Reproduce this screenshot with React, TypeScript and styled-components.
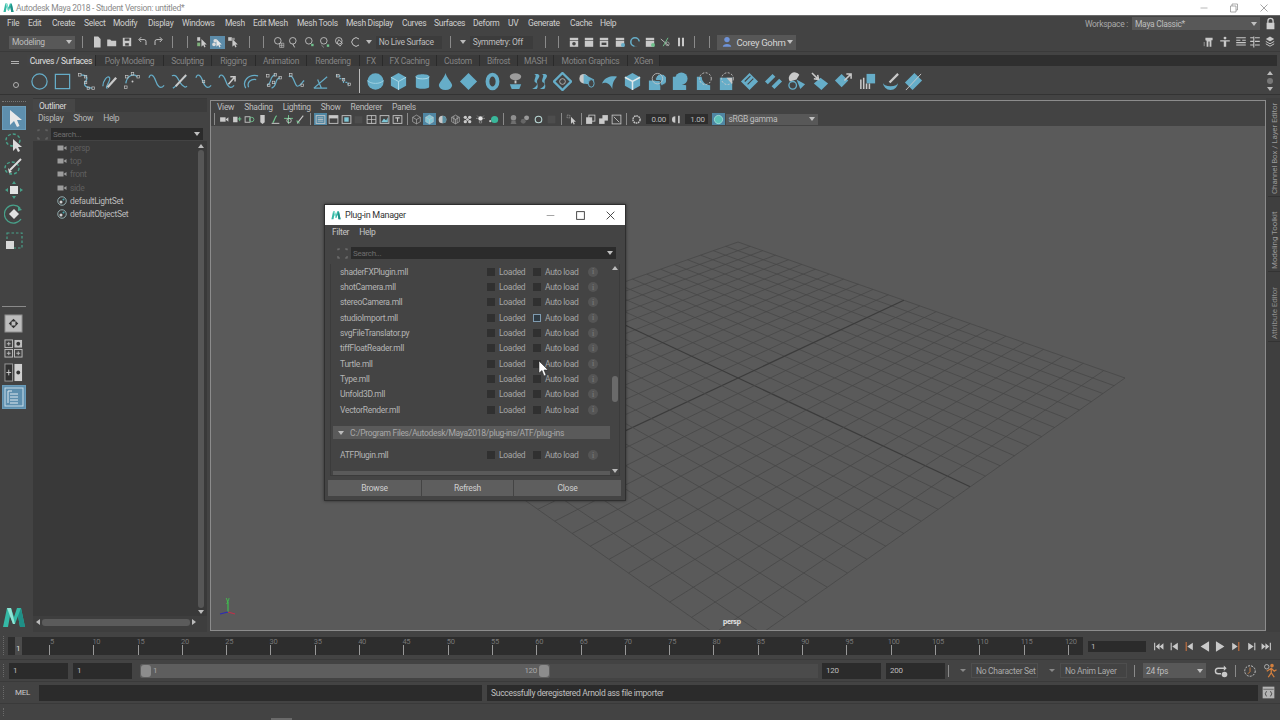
import React from "react";
import styled, { createGlobalStyle } from "styled-components";

const Global = createGlobalStyle`
  html, body { margin: 0; padding: 0; background: #444; }
  * { box-sizing: border-box; }
  body { font-family: Roboto, "Liberation Sans", Arial, sans-serif; font-size: 8.5px; letter-spacing: -0.3px; color: #c4c4c4; }
`;

const BLUE = "#66adc8";
const GRAY = "#c9c9c9";

/* ---------- layout ---------- */

const Page = styled.div`
  position: relative;
  width: 1280px;
  height: 720px;
  overflow: hidden;
  background: #434343;
  display: flex;
  flex-direction: column;
`;

const TitleBar = styled.div`
  height: 15px;
  flex: none;
  background: #fff;
  color: #8a8a8a;
  display: flex;
  align-items: center;
  padding: 0 11px 0 3px;
  gap: 2px;
  font-size: 8.5px;
`;

const WinControls = styled.div`
  margin-left: auto;
  display: flex;
  gap: 20px;
  align-items: center;
`;

const MenuBar = styled.div`
  height: 18px;
  flex: none;
  border-top: 1px solid #6a6a6a;
  display: flex;
  align-items: center;
  padding: 0 7px 4px;
  position: relative;
`;

const MenuItem = styled.span<{ $w: number }>`
  flex: none;
  width: ${(p) => p.$w}px;
  white-space: nowrap;
  color: #cfcfcf;
`;

const Workspace = styled.div`
  margin-left: auto;
  display: flex;
  align-items: center;
  height: 14px;
  color: #a8a8a8;
  gap: 4px;
  margin-right: -4px;
  margin-top: 2px;
`;

const ToolBar = styled.div`
  height: 19px;
  flex: none;
  display: flex;
  align-items: center;
  padding: 0 0 0 9px;
  border-bottom: 1px solid #3a3a3a;
`;

const Select = styled.div<{ $w: number; $dark?: boolean; $h?: number }>`
  width: ${(p) => p.$w}px;
  height: ${(p) => p.$h ?? 13}px;
  flex: none;
  background: ${(p) => (p.$dark ? "#3c3c3c" : "#585858")};
  color: #bdbdbd;
  display: flex;
  align-items: center;
  padding: 0 3px;
  white-space: nowrap;
  position: relative;
`;

const Caret = styled.span<{ $c?: string }>`
  position: absolute;
  right: 3px;
  top: 50%;
  margin-top: -2px;
  width: 0;
  height: 0;
  border-style: solid;
  border-width: 4px 3.5px 0 3.5px;
  border-color: ${(p) => p.$c ?? "#c0c0c0"} transparent transparent transparent;
`;

const Sep = styled.span<{ $x?: number }>`
  flex: none;
  width: 1px;
  height: 12px;
  background: #8a8a8a;
  margin: 0 ${(p) => p.$x ?? 5}px;
`;

const Gap = styled.span<{ $w: number }>`
  flex: none;
  width: ${(p) => p.$w}px;
`;

const Btn = styled.span<{ $w?: number; $on?: boolean }>`
  flex: none;
  width: ${(p) => p.$w ?? 15.3}px;
  height: 13px;
  display: flex;
  align-items: center;
  justify-content: center;
  background: ${(p) => (p.$on ? "#5c8ba8" : "transparent")};
`;

const UserBtn = styled.div`
  flex: none;
  width: 79px;
  height: 15px;
  background: #575757;
  display: flex;
  align-items: center;
  padding-left: 4px;
  gap: 3px;
  color: #d4d4d4;
  font-size: 9.5px;
  position: relative;
`;

const RightIcons = styled.div`
  margin-left: auto;
  display: flex;
  align-items: center;
  gap: 0;
  padding-right: 2px;
`;

const ShelfTabsRow = styled.div`
  margin-top: 3px;
  height: 11px;
  flex: none;
  display: flex;
  align-items: center;
  background: #2f2f2f;
  margin-left: 27px;
  margin-right: 3px;
  position: relative;
`;

const ShelfTab = styled.span<{ $w: number; $on?: boolean }>`
  flex: none;
  width: ${(p) => p.$w}px;
  height: 100%;
  display: flex;
  align-items: center;
  justify-content: center;
  white-space: nowrap;
  font-size: 8.5px;
  color: ${(p) => (p.$on ? "#e0e0e0" : "#858585")};
  background: ${(p) => (p.$on ? "#444" : "#3a3a3a")};
  border-right: 1px solid #2a2a2a;
`;

const ShelfTabsFill = styled.span`
  flex: 1;
`;

const ShelfGrip = styled.span`
  position: absolute;
  left: -16px;
  top: 6px;
  width: 8px;
  height: 3px;
  border-top: 1px solid #b0b0b0;
  border-bottom: 1px solid #b0b0b0;
`;

const ShelfRow = styled.div`
  height: 29px;
  flex: none;
  display: flex;
  align-items: center;
  padding: 2px 0 0 27.6px;
  position: relative;
  border-bottom: 1px solid #333;
`;

const ShelfCell = styled.span`
  flex: none;
  width: 23.43px;
  display: flex;
  justify-content: center;
`;

const ShelfDivider = styled.span`
  flex: none;
  width: 1px;
  height: 24px;
  background: #bbb;
  margin: 0 4px 0 3px;
`;

const ShelfDot = styled.span`
  position: absolute;
  left: 13px;
  top: 16px;
  width: 6px;
  height: 6px;
  border: 1px solid #b0b0b0;
  border-radius: 50%;
`;

const ShelfScroll = styled.span`
  position: absolute;
  right: 6px;
  top: 5px;
  width: 8px;
  height: 20px;
  display: flex;
  flex-direction: column;
  align-items: center;
  justify-content: space-between;
`;

const ShelfKnob = styled.span`
  width: 6px;
  height: 6px;
  border-radius: 50%;
  background: #777;
`;

const TriUp = styled.span`
  width: 0;
  height: 0;
  border-style: solid;
  border-width: 0 3.5px 4px 3.5px;
  border-color: transparent transparent #bbb transparent;
`;

const TriDown = styled.span`
  width: 0;
  height: 0;
  border-style: solid;
  border-width: 4px 3.5px 0 3.5px;
  border-color: #bbb transparent transparent transparent;
`;

const Main = styled.div`
  flex: 1;
  min-height: 0;
  display: flex;
  padding-top: 3px;
`;

const ToolBox = styled.div`
  flex: none;
  width: 33px;
  padding: 0 6px 0 0;
  display: flex;
  flex-direction: column;
  align-items: center;
`;

const GripDots = styled.div`
  width: 24px;
  height: 1px;
  margin: 3px 0 4px;
  border-top: 1px dotted #777;
`;

const Tool = styled.div<{ $on?: boolean; $h?: number; $mt?: number }>`
  width: 24px;
  height: ${(p) => p.$h ?? 24}px;
  margin-top: ${(p) => p.$mt ?? 0}px;
  flex: none;
  display: flex;
  align-items: center;
  justify-content: center;
  background: ${(p) => (p.$on ? "#5e8fae" : "transparent")};
  border: 1px solid ${(p) => (p.$on ? "#6a9cba" : "transparent")};
`;

const ToolRule = styled.div`
  width: 24px;
  height: 1px;
  background: #8a8a8a;
  margin: 53px 0 6px;
  flex: none;
`;

const LogoSlot = styled.div`
  margin-top: auto;
  padding-bottom: 3px;
`;

const Outliner = styled.div`
  flex: none;
  width: 174px;
  margin-right: 3px;
  display: flex;
  flex-direction: column;
  background: #393939;
`;

const OutTabRow = styled.div`
  height: 13px;
  background: #3c3c3c;
  display: flex;
  margin-top: 1px;
  flex: none;
`;

const OutTab = styled.div`
  width: 42px;
  background: #464646;
  color: #d8d8d8;
  padding-left: 6px;
  display: flex;
  align-items: center;
`;

const OutMenu = styled.div`
  height: 14px;
  background: #434343;
  display: flex;
  align-items: center;
  flex: none;
  padding: 0 0 3px 5px;
  gap: 10px;
  color: #b8b8b8;
`;

const OutSearch = styled.div`
  height: 15px;
  background: #434343;
  display: flex;
  align-items: center;
  padding: 2px 4px 1px 3px;
  flex: none;
  gap: 2px;
`;

const SearchField = styled.div`
  flex: 1;
  height: 12px;
  background: #2b2b2b;
  color: #6e6e6e;
  font-size: 8px;
  padding-left: 2px;
  display: flex;
  align-items: center;
  position: relative;
`;

const OutBody = styled.div`
  flex: 1;
  min-height: 0;
  display: flex;
`;

const OutList = styled.div`
  flex: 1;
  padding: 0 0 0 24px;
`;

const OutRow = styled.div<{ $dim?: boolean }>`
  height: 13.3px;
  display: flex;
  align-items: center;
  gap: 3px;
  color: ${(p) => (p.$dim ? "#5f5f5f" : "#bcbcbc")};
  font-size: 8.5px;
`;

const VScroll = styled.div`
  flex: none;
  width: 7px;
  margin-right: 3px;
  display: flex;
  flex-direction: column;
  align-items: center;
  padding: 3px 0 2px;
  gap: 2px;
`;

const VThumb = styled.div`
  flex: 1;
  width: 6px;
  background: #565656;
  border-radius: 3px;
`;

const HScroll = styled.div`
  height: 16px;
  flex: none;
  display: flex;
  align-items: center;
  padding: 0 11px 4px 3px;
  gap: 2px;
  background: #3e3e3e;
`;

const HThumb = styled.div`
  flex: 1;
  height: 7px;
  background: #5b5b5b;
  border-radius: 3px;
`;

const TriLeft = styled.span`
  width: 0;
  height: 0;
  flex: none;
  border-style: solid;
  border-width: 3.5px 4px 3.5px 0;
  border-color: transparent #bbb transparent transparent;
`;

const TriRight = styled.span`
  width: 0;
  height: 0;
  flex: none;
  border-style: solid;
  border-width: 3.5px 0 3.5px 4px;
  border-color: transparent transparent transparent #bbb;
`;

const ViewPanel = styled.div`
  flex: none;
  width: 1056px;
  margin-top: 2px;
  margin-bottom: 1px;
  border: 1px solid #8c8c8c;
  display: flex;
  flex-direction: column;
`;

const ViewMenu = styled.div`
  height: 12px;
  flex: none;
  display: flex;
  align-items: center;
  padding-left: 6px;
  gap: 10px;
  color: #bdbdbd;
  background: #434343;
`;

const ViewTools = styled.div`
  height: 12px;
  flex: none;
  display: flex;
  align-items: center;
  padding-left: 2px;
`;

const VBtn = styled.span<{ $on?: boolean }>`
  flex: none;
  width: 12.75px;
  height: 12px;
  display: flex;
  align-items: center;
  justify-content: center;
  background: ${(p) => (p.$on ? "#4f86a3" : "transparent")};
`;

const NumField = styled.span`
  flex: none;
  width: 23px;
  height: 10px;
  background: #2d2d2d;
  color: #bbb;
  font-size: 8px;
  display: flex;
  align-items: center;
  justify-content: flex-end;
  padding-right: 3px;
`;

const Canvas = styled.div`
  flex: 1;
  min-height: 0;
  margin-top: 1px;
  background: #5a5a5a;
  position: relative;
`;

const CanvasSvg = styled.svg`
  display: block;
  width: 100%;
  height: 100%;
`;

const CamLabel = styled.span`
  position: absolute;
  left: 512px;
  bottom: 4px;
  color: #e4e4e4;
  font-size: 7.5px;
  font-weight: bold;
`;

const SideTabs = styled.div`
  flex: 1;
  padding: 0 0 0 2px;
  display: flex;
  flex-direction: column;
  background: #3f3f3f;
`;

const SideTab = styled.div<{ $h: number; $dim?: boolean }>`
  height: ${(p) => p.$h}px;
  flex: none;
  width: 12px;
  writing-mode: vertical-rl;
  transform: rotate(180deg);
  display: flex;
  align-items: center;
  justify-content: flex-start;
  padding-top: 2px;
  font-size: 8px;
  letter-spacing: -0.1px;
  white-space: nowrap;
  color: ${(p) => (p.$dim ? "#8e8e8e" : "#9a9a9a")};
  border-top: 1px solid #333;
`;

const BottomRow = styled.div`
  flex: none;
  position: relative;
  display: flex;
  align-items: center;
  &::before {
    content: "";
    position: absolute;
    left: 3px;
    top: 4px;
    bottom: 4px;
    border-left: 1px dotted #6a6a6a;
  }
`;

const TimeRow = styled(BottomRow)`
  height: 27px;
  padding: 5px 0 4px 8px;
`;

const Ruler = styled.div`
  flex: none;
  width: 1075px;
  height: 18px;
  background: #2d2d2d;
  display: flex;
  position: relative;
`;

const FrameCell = styled.span`
  position: absolute;
  left: 7px;
  top: 0;
  display: flex;
  align-items: flex-end;
  width: 7px;
  height: 18px;
  background: #4b4b4b;
  color: #ddd;
  font-size: 8px;
  padding: 0 0 2px 1px;
`;

const RulerCell = styled.div<{ $w: number }>`
  flex: none;
  width: ${(p) => p.$w}px;
  height: 18px;
  position: relative;
  display: flex;
  flex-direction: column;
  align-items: flex-end;
`;

const RulerNum = styled.span`
  position: absolute;
  top: 0;
  right: -9px;
  width: 14px;
  text-align: center;
  font-size: 7.5px;
  color: #777;
`;

const RulerTick = styled.span`
  margin-top: auto;
  width: 1px;
  height: 10px;
  background: #999;
`;

const CurField = styled.span`
  flex: none;
  width: 58px;
  height: 11px;
  background: #2b2b2b;
  margin-left: 5px;
  padding-left: 3px;
  display: flex;
  align-items: center;
  color: #bdbdbd;
  font-size: 8px;
`;

const Transport = styled.div`
  margin-left: 5px;
  display: flex;
  align-items: center;
`;

const TBtn = styled.span`
  flex: none;
  width: 15.4px;
  display: flex;
  justify-content: center;
`;

const RangeRow = styled(BottomRow)`
  height: 22px;
  padding-left: 9px;
  border-top: 1px solid #3a3a3a;
`;

const FrameInput = styled.span<{ $ml?: number }>`
  flex: none;
  width: 59px;
  height: 16px;
  background: #2b2b2b;
  margin-left: ${(p) => p.$ml ?? 0}px;
  padding-left: 4px;
  display: flex;
  align-items: center;
  color: #bdbdbd;
  font-size: 8px;
`;

const RangeBar = styled.div`
  flex: none;
  width: 410px;
  height: 14px;
  background: #5e5e5e;
  margin-left: 8px;
  border-radius: 2px;
  display: flex;
  align-items: center;
  padding: 0 1px;
  color: #a8a8a8;
  font-size: 8px;
  gap: 2px;
`;

const RangeKnob = styled.span`
  width: 10px;
  height: 12px;
  background: #8c8c8c;
  border-radius: 3px;
  flex: none;
`;

const RangeTrail = styled.span`
  flex: 1;
  text-align: right;
`;

const RangeTray = styled.span`
  flex: none;
  width: 268px;
  height: 14px;
  background: #4b4b4b;
  margin-right: 4px;
`;

const SetLabel = styled.span<{ $w: number }>`
  flex: none;
  width: ${(p) => p.$w}px;
  height: 15px;
  border: 1px solid #4e4e4e;
  display: flex;
  align-items: center;
  padding-left: 4px;
  color: #a9a9a9;
  font-size: 8.5px;
  white-space: nowrap;
`;

const SmallTri = styled.span<{ $ml: number; $mr: number }>`
  flex: none;
  width: 0;
  height: 0;
  margin: 0 ${(p) => p.$mr}px 0 ${(p) => p.$ml}px;
  border-style: solid;
  border-width: 3px 3px 0 3px;
  border-color: #888 transparent transparent transparent;
`;

const CmdRow = styled(BottomRow)`
  height: 22px;
  padding-left: 15px;
  border-top: 1px solid #3a3a3a;
`;

const MelLabel = styled.span`
  flex: none;
  width: 24px;
  color: #c8c8c8;
  font-size: 8px;
`;

const CmdField = styled.span<{ $w: number; $ml?: number }>`
  flex: none;
  width: ${(p) => p.$w}px;
  height: 16px;
  background: #2b2b2b;
  margin-left: ${(p) => p.$ml ?? 0}px;
  display: flex;
  align-items: center;
  padding-left: 4px;
  color: #c0c0c0;
  font-size: 8.5px;
`;

const HelpRow = styled(BottomRow)`
  height: 17px;
  background: #434343;
  border-top: 1px solid #3a3a3a;
  align-items: flex-end;
  padding-left: 271px;
`;

const HelpGrip = styled.span`
  width: 21px;
  height: 2px;
  background: #6a6a6a;
`;

/* ---------- plug-in manager ---------- */

const Dialog = styled.div`
  position: absolute;
  left: 324px;
  top: 204px;
  width: 302px;
  height: 297px;
  border: 1px solid #2f2f2f;
  background: #444;
  box-shadow: 0 0 3px rgba(0, 0, 0, 0.5);
  display: flex;
  flex-direction: column;
`;

const DialogTitle = styled.div`
  height: 20px;
  flex: none;
  background: #fff;
  color: #333;
  display: flex;
  align-items: center;
  padding-left: 6px;
  gap: 4px;
  font-size: 9px;
  position: relative;
`;

const DialogCtl = styled.div`
  margin-left: auto;
  display: flex;
  align-items: center;
  gap: 19px;
  padding-right: 9px;
`;

const DialogMenu = styled.div`
  height: 14px;
  flex: none;
  margin-top: 0;
  display: flex;
  align-items: center;
  padding-left: 7px;
  gap: 10px;
  color: #c4c4c4;
`;

const DialogSearch = styled.div`
  height: 23px;
  flex: none;
  display: flex;
  align-items: center;
  padding: 8px 9px 3px 11px;
  gap: 2px;
`;

const ListBox = styled.div`
  margin: 2px 5px 0;
  height: 212px;
  flex: none;
  display: flex;
  border: 1px solid #3b3b3b;
  border-top: none;
  overflow: hidden;
`;

const ListBody = styled.div`
  flex: none;
  width: 279px;
  overflow: hidden;
`;

const PlugRow = styled.div<{ $mt?: number }>`
  height: 15.35px;
  display: grid;
  grid-template-columns: 147px 46px 55px 10px;
  align-items: center;
  padding-left: 9px;
  margin-top: ${(p) => p.$mt ?? 0}px;
  color: #b4b4b4;
  font-size: 8.5px;
`;

const CheckCell = styled.div`
  display: flex;
  align-items: center;
  gap: 4px;
  color: #a4a4a4;
`;

const Check = styled.span<{ $on?: boolean }>`
  flex: none;
  width: 8px;
  height: 8px;
  background: ${(p) => (p.$on ? "#2f3b44" : "#303030")};
  border: 1px solid ${(p) => (p.$on ? "#7f9bb0" : "#303030")};
`;

const Info = styled.span`
  width: 10px;
  height: 10px;
  border-radius: 50%;
  background: #555;
  color: #6f6f6f;
  font: bold 8px "Liberation Serif", serif;
  display: flex;
  align-items: center;
  justify-content: center;
`;

const Section = styled.div<{ $mt: number }>`
  height: 13px;
  margin: ${(p) => p.$mt}px 0 0 2px;
  width: 277px;
  background: #5a5a5a;
  display: flex;
  align-items: center;
  padding-left: 5px;
  gap: 6px;
  color: #a8a8a8;
  font-size: 8.5px;
  white-space: nowrap;
`;

const ListScroll = styled.div`
  flex: none;
  width: 10px;
  display: flex;
  flex-direction: column;
  align-items: center;
  padding: 2px 0 2px;
`;

const ScrollThumb = styled.div`
  width: 6px;
  height: 26px;
  margin-top: 106px;
  background: #6a6a6a;
  border-radius: 3px;
`;

const ScrollFill = styled.div`
  flex: 1;
`;

const DialogBtns = styled.div`
  display: flex;
  gap: 1px;
  padding: 4px 3px 0;
`;

const DialogBtn = styled.div<{ $w: number }>`
  flex: none;
  width: ${(p) => p.$w}px;
  height: 16px;
  background: #5e5e5e;
  color: #cfcfcf;
  font-size: 8.5px;
  display: flex;
  align-items: center;
  justify-content: center;
`;

const Pointer = styled.svg`
  position: absolute;
  left: 538px;
  top: 361px;
`;

/* ---------- drawings ---------- */

function Ico({ s = 12, children }: { s?: number; children: React.ReactNode }) {
  return (
    <svg width={s} height={s} viewBox="0 0 20 20" style={{ display: "block", flex: "none" }}>
      {children}
    </svg>
  );
}

function MLogo({ s }: { s: number }) {
  return (
    <svg width={s} height={s} viewBox="0 0 24 20" style={{ display: "block", flex: "none" }}>
      <polygon points="1,20 5,1 9,1 12,10 15,1 19,1 23,20 18,20 16,9 13,17 11,17 8,9 6,20" fill="#35b9a6" />
      <polygon points="5,1 9,1 13,17 11,17" fill="#8fe4d4" />
      <polygon points="19,1 23,20 18,20 16,9" fill="#1f8f86" />
    </svg>
  );
}

const cv = (x: number, y: number) => <rect x={x - 1.3} y={y - 1.3} width="2.6" height="2.6" fill="none" stroke={GRAY} strokeWidth=".7" />;
const l = { fill: "none", stroke: BLUE, strokeWidth: 1.3 };
const f = { fill: BLUE };
const wave = "M2 6C4 1 7 3 9 9S14 19 18 14";

// shelf: curves
const curveIcons: React.ReactNode[] = [
  <circle cx="10" cy="10" r="8" {...l} />,
  <rect x="2.5" y="2.5" width="15" height="15" {...l} />,
  <><path d="M4 3C10 3 12 6 9 10S10 17 16 17" {...l} />{cv(3, 3)}{cv(9, 5)}{cv(9, 11)}{cv(12, 17)}{cv(17, 17)}</>,
  <><path d="M3 15C3 9 8 3 10 6S4 17 8 17" {...l} /><path d="M8 16L17 6" stroke={GRAY} strokeWidth="2.4" /></>,
  <><path d="M3 12C4 4 11 1 15 5" {...l} />{cv(4, 5)}{cv(10, 2)}{cv(3, 16)}{cv(16, 5)}<circle cx="10" cy="10" r="1" fill={GRAY} /></>,
  <path d={wave} {...l} />,
  <><path d="M2 4C8 1 9 11 13 14S16 16 18 15M3 17C8 14 11 9 17 4" {...l} /><path d="M6 15L17 3" stroke={GRAY} strokeWidth="2" /></>,
  <><path d={wave} {...l} />{cv(10, 10)}</>,
  <><path d={wave} {...l} /><path d="M12 13L18 6M14 5h5v5" stroke={GRAY} strokeWidth="1.6" fill="none" /></>,
  <path d="M5 17C1 10 7 2 18 4M8 16C6 11 10 7 16 8" {...l} />,
  <><path d="M3 14C9 12 5 4 12 3M8 17C15 14 10 8 17 6" {...l} />{cv(4, 4)}{cv(12, 3)}{cv(5, 14)}{cv(10, 11)}{cv(17, 6)}</>,
  <><path d="M2 5C7 1 8 15 11 15S15 12 18 9" {...l} />{cv(4, 3)}{cv(16, 14)}</>,
  <path d="M3 17L17 5M3 17L17 17M7 8L11 17" {...l} />,
  <><path d="M2 4h4v3h4v4h5v4" {...l} strokeDasharray="2 1.4" />{cv(4, 4)}{cv(10, 8)}{cv(16, 13)}</>,
];

const diamond = "M10 1L19 10L10 19L1 10Z";
const quadSq = <path d="M3 5h5a9 9 0 0 0 9 9v5H3Z" {...f} />;
const surfaceIcons: React.ReactNode[] = [
  <><circle cx="10" cy="10" r="8.6" {...f} /><path d="M1.6 9C5 13 15 13 18.4 9" fill="none" stroke="#9ed0e0" strokeWidth="1" /></>,
  <><path d="M10 1L18 5.5V14.5L10 19L2 14.5V5.5Z" {...f} /><path d="M2 5.5L10 10L18 5.5M10 10V19" fill="none" stroke="#b5dfec" strokeWidth=".9" /></>,
  <><path d="M3 4.5C3 1.5 17 1.5 17 4.5V15.5C17 18.5 3 18.5 3 15.5Z" {...f} /><path d="M3 5C3 8 17 8 17 5" fill="none" stroke="#b5dfec" strokeWidth=".9" /></>,
  <path d="M10 1C11 6 17 11 17 14A7 5 0 0 1 3 14C3 11 9 6 10 1Z" {...f} />,
  <path d={diamond} {...f} />,
  <><ellipse cx="10" cy="10" rx="5.3" ry="7.3" fill="none" stroke={BLUE} strokeWidth="4" /></>,
  <><ellipse cx="10" cy="5" rx="6" ry="3.6" fill="#9c9c9c" /><path d="M10 9v3" stroke={GRAY} strokeWidth="2" /><path d="M4 13h12l-2 5H6Z" {...f} /></>,
  <><path d="M3 2C10 2 2 9 6 11S4 17 2 18H7C10 15 6 11 8 8S11 3 8 2Z" {...f} /><path d="M11 2C18 2 10 9 14 11S12 17 10 18H15C18 15 14 11 16 8S19 3 16 2Z" {...f} /></>,
  <><path d={diamond} fill="none" stroke={BLUE} strokeWidth="2.4" /><circle cx="10" cy="10" r="3" fill="#444" stroke={GRAY} strokeWidth=".8" /></>,
  <><ellipse cx="7" cy="7" rx="4.5" ry="5" fill={GRAY} /><path d="M7 2L18 8V14L7 12Z" {...f} /><ellipse cx="15" cy="12" rx="3" ry="4" fill="#444" stroke={BLUE} /></>,
  <path d="M2 12C6 4 14 4 18 5C15 8 13 11 13 18C11 13 7 10 2 12Z" {...f} />,
  <><path d="M10 1L18 5.5V14.5L10 19L2 14.5V5.5Z" {...f} /><path d="M2 5.5L10 10L18 5.5M10 10V19" fill="none" stroke="#dfe9ec" strokeWidth="1.6" /></>,
  <><path d="M2 9h12v10H2Z" {...f} /><path d="M14 9h-5a6 6 0 1 1 5 5Z" fill={BLUE} stroke="#444" /><circle cx="11" cy="7" r="5.5" fill="none" stroke={GRAY} strokeWidth=".8" /></>,
  <>{quadSq}<circle cx="12" cy="7" r="6.5" {...f} /></>,
  <>{quadSq}<circle cx="12" cy="7" r="6.2" fill="none" stroke={GRAY} strokeWidth="1" strokeDasharray="2 1.6" /></>,
  <><rect x="3" y="6" width="13" height="13" {...f} /><path d="M10 6h6v7Z" fill={GRAY} /><circle cx="11" cy="7" r="6.2" fill="none" stroke={GRAY} strokeWidth="1" strokeDasharray="2 1.6" /></>,
  <><path d={diamond} {...f} /><path d="M5 10L11 4M8 13L14 7" stroke="#444" strokeWidth="1.2" /></>,
  <><path d="M1 10L9 2L12 5L4 13ZM8 15L16 7L19 10L11 18Z" {...f} /></>,
  <><path d="M3 10A6 6 0 0 1 13 3L10 8Z" fill={GRAY} /><path d="M10 8L19 13L14 18Z" {...f} /><circle cx="6" cy="14" r="4" fill="none" stroke={BLUE} strokeWidth="1.4" /></>,
  <><path d="M10 6L18 12L11 19L3 12Z" {...f} /><path d="M1 1L8 8M3 7L8 8L7 3" fill="none" stroke={GRAY} strokeWidth="1.6" /></>,
  <><path d="M8 2L15 9L8 16L1 9Z" {...f} /><path d="M11 9L18 2M13 2h5v5" fill="none" stroke={GRAY} strokeWidth="1.6" /></>,
  <><rect x="9" y="2" width="9" height="10" {...f} /><path d="M3 8v10M6 6v12M9 12v6M12 12v6" stroke={GRAY} strokeWidth="1.6" /></>,
  <><path d="M2 11A8 8 0 0 0 18 11A8 4 0 0 1 2 11Z" {...f} /><path d="M9 11L18 2" stroke={GRAY} strokeWidth="2.4" /></>,
  <><path d="M11 1L19 9L9 19L1 11Z" {...f} /><path d="M2 19L18 2" stroke={GRAY} strokeWidth="1" /></>,
];

// status line
const g = { fill: GRAY };
const gl = { fill: "none", stroke: GRAY, strokeWidth: 1.6 };
const fileIcons: React.ReactNode[] = [
  <path d="M5 1h7l4 4v14H5Z" {...g} />,
  <path d="M2 6h5l2 2h8v9H2Z" {...g} />,
  <><path d="M3 3h14v14H3Z" {...g} /><rect x="6" y="4" width="8" height="4" fill="#444" /><rect x="7" y="12" width="6" height="4" fill="#444" /></>,
  <path d="M15 15V9a3 3 0 0 0-3-3H4M7 2L3 6l4 4" {...gl} />,
  <path d="M5 15V9a3 3 0 0 1 3-3H16M13 2l4 4-4 4" {...gl} />,
];
const arrowP = "M9 5V18L12 15L14 19L16 18L14 14H18Z";
const selIcons: React.ReactNode[] = [
  <><path d={arrowP} {...g} /><rect x="2" y="2" width="5" height="6" {...g} /><rect x="2" y="11" width="5" height="6" fill="#7eb07a" /></>,
  <><path d={arrowP} fill="#e8e8e8" /><circle cx="7" cy="8" r="3" fill="#dcdcdc" /><circle cx="5" cy="14" r="3" fill="#dcdcdc" /></>,
  <><path d={arrowP} {...g} /><rect x="2" y="2" width="6" height="6" {...g} /><rect x="8" y="3" width="5" height="4" fill="#8f8f8f" /></>,
];
const snap = (c: React.ReactNode) => (
  <><circle cx="8" cy="8" r="5.5" fill="none" stroke={GRAY} strokeWidth="1.4" />{c}</>
);
const snapIcons: React.ReactNode[] = [
  snap(<><path d="M11 12h7v7h-7ZM14.5 12v7M11 15.5h7" stroke={GRAY} fill="none" strokeWidth="1" /></>),
  snap(<path d="M8 13L11 19" stroke={GRAY} strokeWidth="1.6" />),
  snap(<rect x="12" y="13" width="4" height="4" fill="#6fc28d" />),
  snap(<><path d="M4 15l4 4" stroke={GRAY} /><rect x="13" y="14" width="4" height="4" fill="#6fc28d" /></>),
  snap(<path d="M8 6L14 12L10 17L5 12Z" fill="none" stroke={GRAY} strokeWidth="1.4" />),
  <path d="M15 5A7 7 0 1 0 15 15" fill="none" stroke={GRAY} strokeWidth="1.6" />,
];
const clap = (c: React.ReactNode) => (
  <><path d="M3 3h14v4H3Z" {...g} strokeDasharray="2 1" /><rect x="3" y="8" width="14" height="10" {...g} />{c}</>
);
const renderIcons: React.ReactNode[] = [
  clap(<circle cx="10" cy="13" r="3" fill="#444" />),
  clap(null),
  clap(<rect x="6" y="11" width="8" height="4" fill="#444" />),
  clap(<circle cx="15" cy="15" r="3.4" fill={BLUE} />),
  <><circle cx="10" cy="10" r="7" fill="none" stroke={BLUE} strokeWidth="2.6" /><rect x="9" y="9" width="10" height="9" fill="#444" /></>,
  clap(<circle cx="15" cy="15" r="3.2" fill="#6fc28d" />),
  <><path d="M3 5l13 11" stroke={GRAY} strokeWidth="1.4" /><path d="M15 3l-8 14" stroke="#6fc28d" strokeWidth="1.6" /><circle cx="14" cy="13" r="3" fill="none" stroke={GRAY} /></>,
  <path d="M5 3h3.4v14H5ZM11.6 3H15v14h-3.4Z" {...g} />,
];
const wsIcons: [number, React.ReactNode][] = [
  [15, <><path d="M4 3h12v4h-2v11h-3V9H9v9H6V8L4 7Z" {...g} /><path d="M2 10v7" stroke={GRAY} /></>],
  [17, <><circle cx="10" cy="3.5" r="2.4" {...g} /><path d="M2 7h16v2h-6v9h-4V9H2Z" {...g} /></>],
  [15, <path d="M2 3h16M2 7h7M2 11h16M2 15h16M12 7h6" stroke={GRAY} strokeWidth="1.8" />],
  [13, <path d="M2 3h5M10 3h8M2 9h5M10 9h8M2 15h5M10 15h8M8 1v18" stroke={GRAY} strokeWidth="1.8" fill="none" />],
  [17, <><path d="M10 1L17 5L10 9L3 5Z" {...g} /><path d="M3 9L10 13L17 9M3 13L10 17L17 13" {...gl} /></>],
];

// panel toolbar
const cam = <><rect x="2" y="6" width="10" height="8" {...g} /><path d="M12 10L17 6V14Z" {...g} /></>;
const pane = (c: React.ReactNode) => <><rect x="2" y="3" width="16" height="14" fill="none" stroke={GRAY} strokeWidth="1.6" />{c}</>;
const panelIcons1: React.ReactNode[] = [
  cam,
  <><rect x="2" y="5" width="8" height="10" {...g} /><path d="M10 9h7M14 5v8" stroke="#6fc28d" strokeWidth="1.8" /></>,
  <><rect x="2" y="5" width="9" height="10" fill="none" stroke={GRAY} strokeWidth="1.6" /><circle cx="14" cy="10" r="4" fill="none" stroke="#6fc28d" strokeWidth="1.6" /></>,
  <path d="M6 2h8v13l-4 3-4-3Z" {...g} />,
  <><path d="M5 16C8 13 8 7 12 3" stroke="#6fc28d" strokeWidth="2.2" fill="none" /><path d="M3 17h14" stroke={GRAY} strokeWidth="1.8" /></>,
  <><path d="M10 2v16M2 8h16" stroke="#6fc28d" strokeWidth="1.8" /><circle cx="11" cy="12" r="4" fill="none" stroke={GRAY} strokeWidth="1.5" /></>,
  <><path d="M4 17L15 3" stroke={GRAY} strokeWidth="2" /><path d="M3 12l5 5" stroke="#6fc28d" strokeWidth="2" /></>,
];
const panelIcons2: [boolean, React.ReactNode][] = [
  [true, pane(<path d="M5 7h10M5 10h10M5 13h10" stroke={GRAY} strokeWidth="1.4" />)],
  [false, pane(<rect x="2" y="3" width="16" height="5" {...g} />)],
  [false, pane(<rect x="6" y="6" width="8" height="8" fill="#7ec6d6" />)],
  [false, <rect x="3" y="4" width="14" height="13" fill="#4d4d4d" />],
  [false, pane(<path d="M2 10h16M10 3v14" stroke={GRAY} strokeWidth="1.3" />)],
  [false, pane(<path d="M4 15L9 8L13 12L16 6V15Z" fill="#7ec6d6" />)],
  [false, pane(<path d="M6 7h8M10 7v7" stroke={GRAY} strokeWidth="2" />)],
];
const cube = (c: string) => <><path d="M10 2L17 6V14L10 18L3 14V6Z" fill={c} stroke={GRAY} strokeWidth="1" /><path d="M3 6L10 10L17 6M10 10V18" fill="none" stroke={GRAY} strokeWidth="1" /></>;
const panelIcons3: [boolean, React.ReactNode][] = [
  [false, cube("none")],
  [true, cube("#7ec6d6")],
  [false, <><circle cx="10" cy="10" r="7" {...g} /><path d="M10 3A7 7 0 0 1 10 17Z" fill="#5a8ea0" /></>],
  [false, <>{cube("none")}<path d="M7 4v12M13 4v12" stroke={GRAY} /></>],
  [false, <><circle cx="6" cy="6" r="3" {...g} /><circle cx="14" cy="6" r="3" {...g} /><circle cx="6" cy="14" r="3" {...g} /><circle cx="14" cy="14" r="3" {...g} /><circle cx="10" cy="10" r="2.4" fill={GRAY} /></>],
  [false, <><circle cx="10" cy="8" r="4" fill="#e6e6e6" /><path d="M8 13h4v3H8ZM2 8h3M15 8h3M4 3l2 2M16 3l-2 2" stroke={GRAY} /></>],
  [false, <><circle cx="12" cy="10" r="6.5" fill="#39b79a" /><circle cx="4" cy="13" r="2" {...g} /></>],
];
const panelIcons4: React.ReactNode[] = [
  <><circle cx="10" cy="7" r="5" fill="#8f8f8f" /><path d="M7 13h6v2H7ZM5 17h10" stroke="#6f6f6f" strokeWidth="2" /></>,
  <><circle cx="12" cy="7" r="4.5" fill="#9a9a9a" /><circle cx="6" cy="13" r="4.5" fill="#666" /></>,
  <circle cx="10" cy="10" r="6" fill="none" stroke="#b9d7d5" strokeWidth="2" />,
  <rect x="3" y="3" width="14" height="14" fill="#4d4d4d" />,
];

function VRow({ items }: { items: React.ReactNode[] }) {
  return <>{items.map((c, i) => <VBtn key={i}><Ico s={11}>{c}</Ico></VBtn>)}</>;
}

// toolbox
const toolSet = [
  <path d="M6 2L6 17L10 13L13 19L15.5 18L13 12L18 12Z" fill="#e9e9e9" />,
  <><ellipse cx="9" cy="8" rx="7" ry="6" fill="none" stroke="#48a18a" strokeWidth="1.4" strokeDasharray="3 2" /><path d="M9 7V19L12 16L14 20L16 19L14 15H18Z" fill="#dcdcdc" /></>,
  <><ellipse cx="8" cy="12" rx="7" ry="6" fill="none" stroke="#48a18a" strokeWidth="1.4" strokeDasharray="3 2" /><path d="M6 14L17 3" stroke="#ddd" strokeWidth="2" /><path d="M4 12L8 16L5 17Z" fill="#ddd" /></>,
  <><rect x="6" y="6" width="8" height="8" fill="#e2e2e2" /><path d="M10 1L12 4H8ZM10 19L12 16H8ZM1 10L4 8V12ZM19 10L16 8V12Z" fill="#48a18a" /></>,
  <><path d="M10 5L15 10L10 15L5 10Z" fill="#e2e2e2" /><path d="M16 4A9 9 0 1 0 17 15" fill="none" stroke="#48a18a" strokeWidth="1.3" /><path d="M14 2L18 6L14 7Z" fill="#48a18a" /></>,
  <><rect x="3" y="2" width="15" height="15" fill="none" stroke="#48a18a" strokeWidth="1.2" strokeDasharray="2.5 2" /><rect x="2" y="10" width="8" height="8" fill="#d8d8d8" /></>,
];

const menus: [string, number][] = [
  ["File", 21], ["Edit", 24], ["Create", 32], ["Select", 29], ["Modify", 35], ["Display", 34], ["Windows", 43],
  ["Mesh", 28], ["Edit Mesh", 44], ["Mesh Tools", 49], ["Mesh Display", 56], ["Curves", 32], ["Surfaces", 39],
  ["Deform", 35], ["UV", 20], ["Generate", 42], ["Cache", 30], ["Help", 30],
];

const shelfTabs: [string, number, boolean?][] = [
  ["Curves / Surfaces", 69, true], ["Poly Modeling", 68], ["Sculpting", 48], ["Rigging", 44], ["Animation", 51], ["Rendering", 53],
  ["FX", 23], ["FX Caching", 54], ["Custom", 43], ["Bifrost", 38], ["MASH", 36], ["Motion Graphics", 74], ["XGen", 32],
];

const plugins1 = [
  "shaderFXPlugin.mll", "shotCamera.mll", "stereoCamera.mll", "studioImport.mll", "svgFileTranslator.py",
  "tiffFloatReader.mll", "Turtle.mll", "Type.mll", "Unfold3D.mll", "VectorRender.mll",
];

function PlugLine({ name, auto, mt }: { name: string; auto?: boolean; mt?: number }) {
  return (
    <PlugRow $mt={mt}>
      <span>{name}</span>
      <CheckCell><Check />Loaded</CheckCell>
      <CheckCell><Check $on={auto} />Auto load</CheckCell>
      <Info>i</Info>
    </PlugRow>
  );
}

// floor grid projected through a homography, in page coordinates
type P = [number, number];
const T: P = [738, 242], R: P = [1125, 378], N: P = [738, 650], L: P = [351, 378];

function project(u: number, v: number): P {
  const dx1 = R[0] - N[0], dx2 = L[0] - N[0], sx = T[0] - R[0] + N[0] - L[0];
  const dy1 = R[1] - N[1], dy2 = L[1] - N[1], sy = T[1] - R[1] + N[1] - L[1];
  const d = dx1 * dy2 - dx2 * dy1;
  const g2 = (sx * dy2 - dx2 * sy) / d;
  const h2 = (dx1 * sy - sx * dy1) / d;
  const a = R[0] - T[0] + g2 * R[0], b = L[0] - T[0] + h2 * L[0];
  const e = R[1] - T[1] + g2 * R[1], ff = L[1] - T[1] + h2 * L[1];
  const w = g2 * u + h2 * v + 1;
  return [(a * u + b * v + T[0]) / w, (e * u + ff * v + T[1]) / w];
}

function FloorGrid() {
  const lines: React.ReactNode[] = [];
  const n = 24;
  for (let i = 0; i <= n; i++) {
    const t = i / n;
    const mid = i === n / 2;
    const st = mid ? "#3c3c3c" : "#484848";
    const a = project(t, 0), b = project(t, 1), c = project(0, t), d = project(1, t);
    lines.push(<line key={`a${i}`} x1={a[0]} y1={a[1]} x2={b[0]} y2={b[1]} stroke={st} strokeWidth={mid ? 1.2 : 0.8} />);
    lines.push(<line key={`b${i}`} x1={c[0]} y1={c[1]} x2={d[0]} y2={d[1]} stroke={st} strokeWidth={mid ? 1.2 : 0.8} />);
  }
  return (
    <CanvasSvg viewBox="211 126 1054 504" preserveAspectRatio="none">
      {lines}
      <line x1="228" y1="612" x2="228" y2="602" stroke="#37d24a" strokeWidth="1" />
      <text x="226" y="602" fontSize="7" fill="#37d24a" fontFamily="Liberation Sans">y</text>
      <line x1="228" y1="612" x2="235" y2="614" stroke="#c0304a" strokeWidth="1.2" />
      <line x1="228" y1="612" x2="220" y2="614" stroke="#2a2ab8" strokeWidth="1.2" />
    </CanvasSvg>
  );
}

export default function App() {
  return (
    <Page>
      <Global />
      <TitleBar>
        <MLogo s={11} />
        <span>Autodesk Maya 2018 - Student Version: untitled*</span>
        <WinControls>
          <Ico s={10}><path d="M3 10h14" stroke="#a0a0a0" strokeWidth="1.5" /></Ico>
          <Ico s={10}><path d="M3 6h11v12H3ZM6 6V2h11v12h-3" fill="none" stroke="#888" strokeWidth="1.4" /></Ico>
          <Ico s={10}><path d="M3 3L17 17M17 3L3 17" stroke="#888" strokeWidth="1.5" /></Ico>
        </WinControls>
      </TitleBar>

      <MenuBar>
        {menus.map(([m, w]) => <MenuItem key={m} $w={w}>{m}</MenuItem>)}
        <Workspace>
          <span>Workspace :</span>
          <Select $w={128} $h={13}>Maya Classic*<Caret /></Select>
          <Ico s={13}><path d="M5 9V6a5 5 0 0 1 10 0v3h1v10H4V9Z" fill="#cfcfcf" /><path d="M7 9V6a3 3 0 0 1 6 0v3Z" fill="#434343" /></Ico>
        </Workspace>
      </MenuBar>

      <ToolBar>
        <Select $w={66}>Modeling<Caret /></Select>
        <Gap $w={7} />
        <Sep $x={0} />
        <Gap $w={6} />
        {fileIcons.map((c, i) => <Btn key={i}><Ico>{c}</Ico></Btn>)}
        <Gap $w={7} /><Sep $x={0} /><Gap $w={14} /><Sep $x={0} /><Gap $w={6} />
        {selIcons.map((c, i) => <Btn key={i} $on={i === 1}><Ico>{c}</Ico></Btn>)}
        <Gap $w={9} /><Sep $x={0} /><Gap $w={13} /><Sep $x={0} /><Gap $w={7} />
        {snapIcons.map((c, i) => <Btn key={i}><Ico>{c}</Ico></Btn>)}
        <Gap $w={2.5} />
        <TriDown />
        <Gap $w={4} />
        <Select $w={66} $dark>No Live Surface</Select>
        <Gap $w={8} />
        <Sep $x={0} />
        <Gap $w={9} />
        <TriDown />
        <Gap $w={4} />
        <Select $w={63} $dark>Symmetry: Off</Select>
        <Gap $w={12} />
        <Sep $x={0} /><Gap $w={12} /><Sep $x={0} />
        <Gap $w={7.4} />
        {renderIcons.map((c, i) => <Btn key={i}><Ico>{c}</Ico></Btn>)}
        <Gap $w={6} />
        <Sep $x={0} /><Gap $w={14} /><Sep $x={0} />
        <Gap $w={7} />
        <UserBtn>
          <Ico s={12}><circle cx="10" cy="6" r="4.5" fill="#6f93d8" /><path d="M3 18C3 12 17 12 17 18Z" fill="#6f93d8" /></Ico>
          Corey Gohm
          <Caret />
        </UserBtn>
        <RightIcons>
          {wsIcons.map(([w, c], i) => <Btn key={i} $w={w}><Ico>{c}</Ico></Btn>)}
        </RightIcons>
      </ToolBar>

      <ShelfTabsRow>
        <ShelfGrip />
        {shelfTabs.map(([t, w, on]) => <ShelfTab key={t} $w={w} $on={on}>{t}</ShelfTab>)}
        <ShelfTabsFill />
      </ShelfTabsRow>

      <ShelfRow>
        <ShelfDot />
        {curveIcons.map((c, i) => <ShelfCell key={i}><Ico s={19}>{c}</Ico></ShelfCell>)}
        <ShelfDivider />
        {surfaceIcons.map((c, i) => <ShelfCell key={i}><Ico s={19}>{c}</Ico></ShelfCell>)}
        <ShelfScroll><TriUp /><ShelfKnob /><TriDown /></ShelfScroll>
      </ShelfRow>

      <Main>
        <ToolBox>
          <GripDots />
          {toolSet.map((c, i) => <Tool key={i} $on={i === 0} $mt={i === 5 ? 3 : 0}><Ico s={20}>{c}</Ico></Tool>)}
          <ToolRule />
          <Tool $h={20}>
            <Ico s={19}><rect x="1" y="1" width="18" height="18" fill="#bdbdbd" stroke="#888" /><path d="M10 5L13 8H7ZM10 15L13 12H7ZM5 10L8 7V13ZM15 10L12 7V13Z" fill="#333" /></Ico>
          </Tool>
          <Tool $h={20} $mt={5}>
            <Ico s={19}><g stroke="#bdbdbd" fill="none"><rect x="1" y="1" width="8" height="8" /><rect x="1" y="11" width="8" height="8" /><rect x="11" y="11" width="8" height="8" /><path d="M5 3v4M3 5h4M5 13v4M3 15h4M15 13v4M13 15h4" /></g><rect x="11" y="1" width="8" height="8" fill="#bdbdbd" /><circle cx="15" cy="5" r="2" fill="#333" /></Ico>
          </Tool>
          <Tool $h={20} $mt={4}>
            <Ico s={19}><rect x="1" y="1" width="8" height="18" fill="#303030" stroke="#9a9a9a" /><path d="M5 7v6M2.5 10h5" stroke="#ccc" /><rect x="11" y="1" width="8" height="18" fill="#cfcfcf" /><circle cx="15" cy="10" r="2" fill="#333" /></Ico>
          </Tool>
          <Tool $on $h={24} $mt={3}>
            <Ico s={20}><rect x="1" y="1" width="18" height="18" fill="none" stroke="#c8dce8" /><path d="M4 4h4M6 7h8M6 10h8M6 13h8M6 16h8M4 4v12" stroke="#dfe9f0" /></Ico>
          </Tool>
          <LogoSlot><MLogo s={24} /></LogoSlot>
        </ToolBox>

        <Outliner>
          <OutTabRow><OutTab>Outliner</OutTab></OutTabRow>
          <OutMenu><span>Display</span><span>Show</span><span>Help</span></OutMenu>
          <OutSearch>
            <Ico s={13}><path d="M3 5V3h3M14 3h3v2M3 14v3h3M14 17h3v-3" fill="none" stroke="#6a6a6a" strokeWidth="1.6" /></Ico>
            <SearchField>Search...<Caret /></SearchField>
          </OutSearch>
          <OutBody>
            <OutList>
              {["persp", "top", "front", "side"].map((n) => (
                <OutRow key={n} $dim>
                  <Ico s={10}><rect x="1" y="5" width="12" height="10" fill="#9c9c9c" /><path d="M13 10L19 6V14Z" fill="#9c9c9c" /></Ico>
                  {n}
                </OutRow>
              ))}
              {["defaultLightSet", "defaultObjectSet"].map((n) => (
                <OutRow key={n}>
                  <Ico s={10}><circle cx="10" cy="10" r="8.5" fill="none" stroke="#a8c8cc" strokeWidth="1.6" /><circle cx="8" cy="12" r="3" fill="#d0d0d0" /><circle cx="13" cy="7" r="2" fill="#45a8b0" /></Ico>
                  {n}
                </OutRow>
              ))}
            </OutList>
            <VScroll><TriUp /><VThumb /><TriDown /></VScroll>
          </OutBody>
          <HScroll><TriLeft /><HThumb /><TriRight /></HScroll>
        </Outliner>

        <ViewPanel>
          <ViewMenu>
            {["View", "Shading", "Lighting", "Show", "Renderer", "Panels"].map((m) => <span key={m}>{m}</span>)}
          </ViewMenu>
          <ViewTools>
            <Sep $x={1} />
            <Gap $w={2} />
            <VRow items={panelIcons1} />
            <Sep $x={3} />
            {panelIcons2.map(([on, c], i) => <VBtn key={i} $on={on}><Ico s={11}>{c}</Ico></VBtn>)}
            <Sep $x={3} />
            {panelIcons3.map(([on, c], i) => <VBtn key={i} $on={on}><Ico s={11}>{c}</Ico></VBtn>)}
            <Sep $x={3} />
            <VRow items={panelIcons4} />
            <Sep $x={3} />
            <VBtn><Ico s={11}><path d={arrowP} {...g} /><path d="M2 2h5v5H2Z" fill="none" stroke={GRAY} strokeDasharray="1.5 1" /></Ico></VBtn>
            <Sep $x={3} />
            <VBtn><Ico s={11}><rect x="2" y="6" width="11" height="12" {...g} /><rect x="7" y="2" width="11" height="11" fill="none" stroke={GRAY} strokeWidth="1.5" /></Ico></VBtn>
            <VBtn><Ico s={11}><rect x="2" y="8" width="10" height="10" {...g} /><rect x="8" y="2" width="10" height="10" {...g} /></Ico></VBtn>
            <VBtn><Ico s={11}><rect x="2" y="2" width="16" height="16" fill="none" stroke={GRAY} strokeWidth="1.5" /><path d="M5 5L15 15" stroke={GRAY} strokeWidth="1.5" /></Ico></VBtn>
            <Sep $x={3} />
            <VBtn><Ico s={11}><circle cx="10" cy="10" r="6.5" fill="none" stroke={GRAY} strokeWidth="2.6" strokeDasharray="3 1.2" /></Ico></VBtn>
            <Gap $w={3.5} />
            <NumField>0.00</NumField>
            <Gap $w={2} />
            <VBtn><Ico s={11}><path d="M6 4A6 6 0 0 0 6 16Z" fill={GRAY} /><path d="M11 3h3v14h-3Z" {...g} /></Ico></VBtn>
            <Gap $w={1} />
            <NumField>1.00</NumField>
            <Gap $w={4} />
            <VBtn $on><Ico s={11}><circle cx="10" cy="10" r="7.5" fill="#5cc0b8" stroke="#cfe" /></Ico></VBtn>
            <Gap $w={1} />
            <Select $w={92} $h={11}>sRGB gamma<Caret /></Select>
          </ViewTools>
          <Canvas>
            <FloorGrid />
            <CamLabel>persp</CamLabel>
          </Canvas>
        </ViewPanel>

        <SideTabs>
          <SideTab $h={99}>Channel Box / Layer Editor</SideTab>
          <SideTab $h={75}>Modeling Toolkit</SideTab>
          <SideTab $h={70} $dim>Attribute Editor</SideTab>
        </SideTabs>
      </Main>

      <TimeRow>
        <Ruler>
          <FrameCell>1</FrameCell>
          {Array.from({ length: 24 }, (_, i) => (
            <RulerCell key={i} $w={i === 0 ? 42 : 44.3}>
              <RulerNum>{(i + 1) * 5}</RulerNum>
              <RulerTick />
            </RulerCell>
          ))}
        </Ruler>
        <CurField>1</CurField>
        <Transport>
          {[
            <><path d="M3 3v14" stroke={GRAY} strokeWidth="2" /><path d="M12 4L5 10L12 16ZM19 4L12 10L19 16Z" {...g} /></>,
            <><path d="M4 3v14" stroke={GRAY} strokeWidth="2" /><path d="M16 3L6 10L16 17Z" {...g} /></>,
            <><path d="M4 2v16" stroke="#c8703c" strokeWidth="2" /><path d="M16 3L6 10L16 17Z" {...g} /></>,
            <path d="M17 2L4 10L17 18Z" {...g} />,
            <path d="M3 2L16 10L3 18Z" {...g} />,
            <><path d="M16 2v16" stroke="#c8703c" strokeWidth="2" /><path d="M4 3L14 10L4 17Z" {...g} /></>,
            <><path d="M16 3v14" stroke={GRAY} strokeWidth="2" /><path d="M4 3L14 10L4 17Z" {...g} /></>,
            <><path d="M17 3v14" stroke={GRAY} strokeWidth="2" /><path d="M1 4L8 10L1 16ZM8 4L15 10L8 16Z" {...g} /></>,
          ].map((c, i) => <TBtn key={i}><Ico s={i === 3 || i === 4 ? 13 : 11}>{c}</Ico></TBtn>)}
        </Transport>
      </TimeRow>

      <RangeRow>
        <FrameInput>1</FrameInput>
        <FrameInput $ml={5}>1</FrameInput>
        <RangeBar>
          <RangeKnob />
          <span>1</span>
          <RangeTrail>120</RangeTrail>
          <RangeKnob />
        </RangeBar>
        <RangeTray />
        <FrameInput>120</FrameInput>
        <FrameInput $ml={5}>200</FrameInput>
        <Gap $w={3} />
        <Sep $x={0} />
        <SmallTri $ml={11} $mr={5} />
        <SetLabel $w={67}>No Character Set</SetLabel>
        <SmallTri $ml={11} $mr={5} />
        <SetLabel $w={67}>No Anim Layer</SetLabel>
        <Gap $w={7} />
        <Sep $x={0} />
        <Gap $w={8} />
        <Select $w={63} $h={15}>24 fps<Caret /></Select>
        <Gap $w={8} />
        <Ico s={14}><path d="M15 6H6a3 3 0 0 0 0 8h4" fill="none" stroke={GRAY} strokeWidth="2" /><path d="M14 2l4 4-4 4Z" {...g} /><circle cx="15" cy="15" r="4" {...g} /></Ico>
        <Gap $w={7} />
        <Sep $x={0} />
        <Gap $w={7} />
        <Ico s={14}><circle cx="10" cy="10" r="7.5" fill="none" stroke={GRAY} strokeWidth="1.3" strokeDasharray="3 1.5" /><path d="M10 5v6l-3 3" stroke="#d27f3e" strokeWidth="1.3" fill="none" /></Ico>
        <Gap $w={6} />
        <Ico s={15}><circle cx="5" cy="5" r="3" fill="none" stroke={GRAY} /><circle cx="12" cy="3.5" r="2.4" fill="#d27f3e" /><path d="M5 11L11 7L15 11L18 9M11 7V13L7 19M11 13L15 19" stroke="#d27f3e" strokeWidth="1.8" fill="none" /></Ico>
      </RangeRow>

      <CmdRow>
        <MelLabel>MEL</MelLabel>
        <CmdField $w={443} />
        <CmdField $w={771} $ml={5}>Successfully deregistered Arnold ass file importer</CmdField>
        <Gap $w={4} />
        <Ico s={13}><rect x="1" y="1" width="18" height="18" fill="#b4b4b4" /><path d="M2 5h16" stroke="#444" /><path d="M7 8L5 12L7 16M13 8L15 12L13 16" stroke="#444" strokeWidth="1.4" fill="none" /></Ico>
      </CmdRow>
      <HelpRow><HelpGrip /></HelpRow>

      <Dialog>
        <DialogTitle>
          <MLogo s={10} />
          Plug-in Manager
          <DialogCtl>
            <Ico s={11}><path d="M3 10h14" stroke="#999" strokeWidth="1.6" /></Ico>
            <Ico s={11}><rect x="3" y="3" width="14" height="14" fill="none" stroke="#333" strokeWidth="1.6" /></Ico>
            <Ico s={11}><path d="M3 3L17 17M17 3L3 17" stroke="#333" strokeWidth="1.6" /></Ico>
          </DialogCtl>
        </DialogTitle>
        <DialogMenu><span>Filter</span><span>Help</span></DialogMenu>
        <DialogSearch>
          <Ico s={13}><path d="M3 5V3h3M14 3h3v2M3 14v3h3M14 17h3v-3" fill="none" stroke="#777" strokeWidth="1.6" /></Ico>
          <SearchField>Search...<Caret /></SearchField>
        </DialogSearch>
        <ListBox>
          <ListBody>
            {plugins1.map((n) => <PlugLine key={n} name={n} auto={n === "studioImport.mll"} />)}
            <Section $mt={9}><TriDown />C:/Program Files/Autodesk/Maya2018/plug-ins/ATF/plug-ins</Section>
            <PlugLine name="ATFPlugin.mll" mt={8} />
            <Section $mt={8}><TriDown /></Section>
          </ListBody>
          <ListScroll><TriUp /><ScrollThumb /><ScrollFill /><TriDown /></ListScroll>
        </ListBox>
        <DialogBtns>
          <DialogBtn $w={93}>Browse</DialogBtn>
          <DialogBtn $w={91}>Refresh</DialogBtn>
          <DialogBtn $w={107}>Close</DialogBtn>
        </DialogBtns>
      </Dialog>

      <Pointer width="10" height="16" viewBox="0 0 10 16">
        <path d="M1 0V12L4 9.5L6 15L8 14L6 9H10Z" fill="#fff" stroke="#222" strokeWidth=".5" />
      </Pointer>
    </Page>
  );
}
